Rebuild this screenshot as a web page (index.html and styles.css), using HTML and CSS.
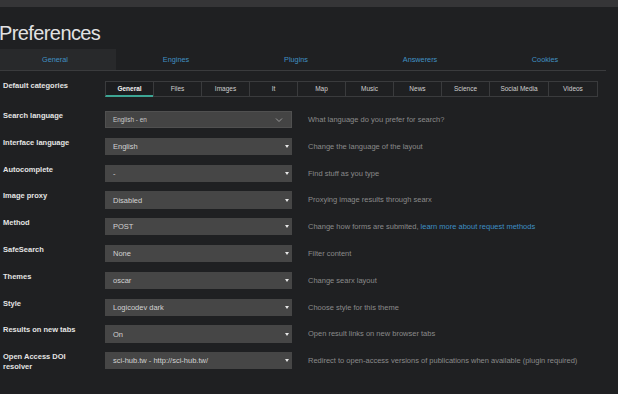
FILE: index.html
```html
<!DOCTYPE html>
<html lang="en">
<head>
<meta charset="utf-8">
<title>Preferences</title>
<link rel="stylesheet" href="styles.css">
</head>
<body>
<div class="topbar"></div>
<div class="page">
  <h1 class="title">Preferences</h1>
  <nav class="tabs">
    <a class="tab tab-active">General</a>
    <a class="tab">Engines</a>
    <a class="tab">Plugins</a>
    <a class="tab tab-wide">Answerers</a>
    <a class="tab">Cookies</a>
  </nav>
  <form class="form">
    <div class="row row-cats">
      <div class="label">Default categories</div>
      <div class="cats">
        <span class="cat cat-active">General</span>
        <span class="cat">Files</span>
        <span class="cat">Images</span>
        <span class="cat">It</span>
        <span class="cat">Map</span>
        <span class="cat">Music</span>
        <span class="cat">News</span>
        <span class="cat">Science</span>
        <span class="cat cat-wide">Social Media</span>
        <span class="cat cat-last">Videos</span>
      </div>
    </div>
    <div class="row">
      <div class="label">Search language</div>
      <div class="select select-search"><span>English - en</span>
        <svg class="chevron" width="8" height="6" viewBox="0 0 8 6"><polyline points="1,1.5 4,4.5 7,1.5" fill="none" stroke="#9a9a9a" stroke-width="1"/></svg>
      </div>
      <div class="help">What language do you prefer for search?</div>
    </div>
    <div class="row">
      <div class="label">Interface language</div>
      <div class="select"><span>English</span><i class="caret"></i></div>
      <div class="help">Change the language of the layout</div>
    </div>
    <div class="row">
      <div class="label">Autocomplete</div>
      <div class="select"><span>-</span><i class="caret"></i></div>
      <div class="help">Find stuff as you type</div>
    </div>
    <div class="row">
      <div class="label">Image proxy</div>
      <div class="select"><span>Disabled</span><i class="caret"></i></div>
      <div class="help">Proxying image results through searx</div>
    </div>
    <div class="row">
      <div class="label">Method</div>
      <div class="select"><span>POST</span><i class="caret"></i></div>
      <div class="help">Change how forms are submited, <a class="link">learn more about request methods</a></div>
    </div>
    <div class="row">
      <div class="label">SafeSearch</div>
      <div class="select"><span>None</span><i class="caret"></i></div>
      <div class="help">Filter content</div>
    </div>
    <div class="row">
      <div class="label">Themes</div>
      <div class="select"><span>oscar</span><i class="caret"></i></div>
      <div class="help">Change searx layout</div>
    </div>
    <div class="row">
      <div class="label">Style</div>
      <div class="select"><span>Logicodev dark</span><i class="caret"></i></div>
      <div class="help">Choose style for this theme</div>
    </div>
    <div class="row">
      <div class="label">Results on new tabs</div>
      <div class="select"><span>On</span><i class="caret"></i></div>
      <div class="help">Open result links on new browser tabs</div>
    </div>
    <div class="row">
      <div class="label">Open Access DOI resolver</div>
      <div class="select"><span>sci-hub.tw - http://sci-hub.tw/</span><i class="caret"></i></div>
      <div class="help">Redirect to open-access versions of publications when available (plugin required)</div>
    </div>
  </form>
</div>
</body>
</html>
```
FILE: styles.css
```css
html, body {
  margin: 0;
  padding: 0;
  background: #1f2022;
  font-family: "Liberation Sans", Arial, sans-serif;
  overflow: hidden;
}

.topbar {
  height: 7px;
  background: #353537;
}

.page {
  margin-left: -6px;
  width: 612px;
}

.title {
  margin: 13px 0 3px;
  padding-left: 5px;
  font-size: 20px;
  line-height: 26px;
  letter-spacing: -0.6px;
  font-weight: normal;
  color: #e2e2e2;
}

.tabs {
  display: grid;
  grid-template-columns: 122px 120px 120px 128px 122px;
  border-bottom: 1px solid #3a3b3d;
}

.tab {
  height: 21px;
  line-height: 21px;
  text-align: center;
  font-size: 7.3px;
  color: #4090c2;
}

.tab-active {
  background: #28292b;
}

.form {
  padding-top: 10px;
}

.row {
  display: grid;
  grid-template-columns: 111px 187px 1fr;
  align-items: start;
  margin-bottom: 9.5px;
}

.row-cats {
  grid-template-columns: 111px auto;
  margin-bottom: 14px;
}

.label {
  padding-left: 9px;
  width: 88px;
  font-size: 7.5px;
  line-height: 10px;
  font-weight: bold;
  color: #e4e4e4;
}

.cats {
  display: flex;
  height: 16px;
}

.cat {
  box-sizing: border-box;
  min-width: 49px;
  height: 16px;
  padding: 0 6px;
  border: 1px solid #3a3b3d;
  margin-right: -1px;
  line-height: 14px;
  text-align: center;
  font-size: 6.5px;
  color: #cfcfcf;
  white-space: nowrap;
}

.cat-wide {
  min-width: 60px;
}

.cat-last {
  min-width: 50px;
}

.cat-active {
  color: #f0f0f0;
  font-weight: bold;
  border-bottom: 2px solid #3da594;
  background: #1c1d1f;
}

.select {
  box-sizing: border-box;
  height: 17.3px;
  display: flex;
  align-items: center;
  justify-content: space-between;
  padding: 0 3px 0 8px;
  background: #464646;
  font-size: 7.5px;
  color: #d2d2d2;
}

.select-search {
  padding: 0 8px 0 7px;
  border: 1px solid #505050;
  background: #444444;
  font-size: 6.4px;
  color: #c8c8c8;
}

.chevron {
  display: block;
}

.caret {
  display: block;
  width: 0;
  height: 0;
  border-left: 2px solid transparent;
  border-right: 2px solid transparent;
  border-top: 3px solid #e6e6e6;
}

.help {
  padding-left: 16px;
  line-height: 17.3px;
  font-size: 7.5px;
  color: #8a8a8a;
  white-space: nowrap;
}

.link {
  color: #3e8fc4;
}
```
